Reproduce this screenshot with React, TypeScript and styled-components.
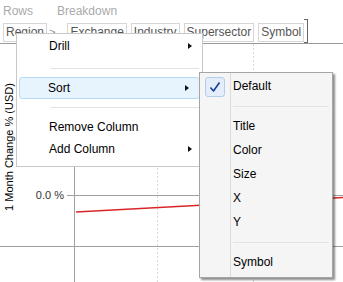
import React from "react"
import styled, { createGlobalStyle } from "styled-components"

const GlobalStyle = createGlobalStyle`
    html, body {
        margin: 0;
        padding: 0;
        background: #fff;
        font-family: "Liberation Sans", Arial, Helvetica, sans-serif;
    }
`

const Page = styled.div`
    position: relative;
    width: 343px;
    height: 282px;
    overflow: hidden;
    background: #fff;
    font-size: 12px;
`

const Header = styled.div`
    border-bottom: 1px solid #9a9a9a;
    padding-left: 3px;
    height: 43px;
`

const LabelRow = styled.div`
    display: flex;
    padding-top: 4px;
    height: 15px;
    line-height: 14px;
    color: #aaa;
`

const Label = styled.span<{ $gap?: number }>`
    margin-right: ${p => p.$gap ?? 0}px;
`

const TagsRow = styled.div`
    display: flex;
    align-items: flex-start;
    height: 24px;
`

const Tag = styled.span<{ $gap?: number }>`
    margin-top: 4px;
    margin-right: ${p => p.$gap ?? 4}px;
    height: 17px;
    line-height: 17px;
    padding: 0 2px;
    border: 1px solid #d6d6d6;
    color: #555;
    background: #fff;
`

const Chevron = styled.span`
    margin-top: 4px;
    line-height: 19px;
    color: #888;
    margin-right: 12px;
    font-size: 11px;
`

const DropMark = styled.span`
    height: 24px;
    margin-left: -4px;
    border: 1px solid #666;
    border-left: none;
    box-sizing: border-box;
    width: 4px;
`

const Chart = styled.svg`
    display: block;
`

const Menu = styled.div`
    position: absolute;
    left: 16px;
    top: 33px;
    width: 185px;
    height: 131px;
    border: 1px solid #c8c8c8;
    background: #fff;
    padding-top: 1px;
    box-sizing: content-box;
    color: #000;
`

const MenuItem = styled.div<{ $active?: boolean }>`
    position: relative;
    display: flex;
    align-items: center;
    justify-content: space-between;
    height: ${p => (p.$active ? 20 : 22)}px;
    padding: 0 10px 0 ${p => (p.$active ? 28 : 32)}px;
    margin: 0 ${p => (p.$active ? 2 : 0)}px;
    border: ${p => (p.$active ? "1px solid #b3dcf3" : "none")};
    border-radius: 3px;
    background: ${p => (p.$active ? "#e8f4fd" : "transparent")};
`

const Arrow = styled.span`
    width: 0;
    height: 0;
    border-top: 3.5px solid transparent;
    border-bottom: 3.5px solid transparent;
    border-left: 4px solid #111;
`

const Separator = styled.div<{ $top: number; $bottom: number; $left?: number }>`
    height: 1px;
    background: #e3e3e3;
    margin: ${p => p.$top}px 3px ${p => p.$bottom}px ${p => p.$left ?? 33}px;
`

const SubMenu = styled.div`
    position: absolute;
    left: 199px;
    top: 72px;
    width: 132px;
    height: 203px;
    padding-top: 1px;
    box-sizing: content-box;
    border: 1px solid #a5a5a5;
    background: linear-gradient(to right, #f5f5f5 30px, #dcdcdc 30px, #dcdcdc 31px, #f5f5f5 31px);
    box-shadow: 2px 2px 2px rgba(0, 0, 0, 0.45);
    color: #000;
`

const SubItem = styled.div`
    position: relative;
    display: flex;
    align-items: center;
    height: 24px;
    padding-left: 33px;
`

const CheckBox = styled.span`
    position: absolute;
    left: 5px;
    top: 3px;
    width: 20px;
    height: 20px;
    border: 1px solid #b4cde8;
    border-radius: 3px;
    background: #e3eefa;
    box-sizing: border-box;
    display: flex;
    align-items: center;
    justify-content: center;
`

const sortOptions = ["Title", "Color", "Size", "X", "Y"]

export default function App() {
    return (
        <Page>
            <GlobalStyle />
            <Header>
                <LabelRow>
                    <Label $gap={24}>Rows</Label>
                    <Label>Breakdown</Label>
                </LabelRow>
                <TagsRow>
                    <Tag $gap={2}>Region</Tag>
                    <Chevron>&gt;</Chevron>
                    <Tag>Exchange</Tag>
                    <Tag>Industry</Tag>
                    <Tag>Supersector</Tag>
                    <Tag>Symbol</Tag>
                    <DropMark />
                </TagsRow>
            </Header>

            <Chart width="343" height="238" viewBox="0 0 343 238">
                <line x1="157.5" y1="0" x2="157.5" y2="238" stroke="#d8d8d8" strokeDasharray="2 2" />
                <line x1="253.5" y1="0" x2="253.5" y2="238" stroke="#d8d8d8" strokeDasharray="2 2" />
                <line x1="74.5" y1="0" x2="74.5" y2="238" stroke="#a0a0a0" />
                <line x1="67" y1="151.5" x2="343" y2="151.5" stroke="#a0a0a0" />
                <line x1="0" y1="202.5" x2="343" y2="202.5" stroke="#a0a0a0" />
                <line x1="76" y1="168" x2="343" y2="153.5" stroke="#d9252a" strokeWidth="1.6" />
                <text x="64" y="155" textAnchor="end" fontSize="11" fill="#333" fontFamily="Liberation Sans, Arial, sans-serif">
                    0.0 %
                </text>
                <text
                    x="0"
                    y="0"
                    transform="translate(13 103) rotate(-90)"
                    textAnchor="middle"
                    fontSize="11"
                    fill="#000"
                    fontFamily="Liberation Sans, Arial, sans-serif"
                >
                    1 Month Change % (USD)
                </text>
            </Chart>

            <Menu>
                <MenuItem>
                    <span>Drill</span>
                    <Arrow />
                </MenuItem>
                <Separator $top={11} $bottom={8} />
                <MenuItem $active>
                    <span>Sort</span>
                    <Arrow />
                </MenuItem>
                <Separator $top={8} $bottom={8} />
                <MenuItem>
                    <span>Remove Column</span>
                </MenuItem>
                <MenuItem>
                    <span>Add Column</span>
                    <Arrow />
                </MenuItem>
            </Menu>

            <SubMenu>
                <SubItem>
                    <CheckBox>
                        <svg width="12" height="12" viewBox="0 0 12 12">
                            <path d="M1.5 6.5 L4.5 10 L10.5 1.5" fill="none" stroke="#1b3c97" strokeWidth="1.6" strokeLinejoin="round" />
                        </svg>
                    </CheckBox>
                    Default
                </SubItem>
                <Separator $top={8} $bottom={7} />
                {sortOptions.map(o => (
                    <SubItem key={o}>{o}</SubItem>
                ))}
                <Separator $top={8} $bottom={7} />
                <SubItem>Symbol</SubItem>
            </SubMenu>
        </Page>
    )
}
